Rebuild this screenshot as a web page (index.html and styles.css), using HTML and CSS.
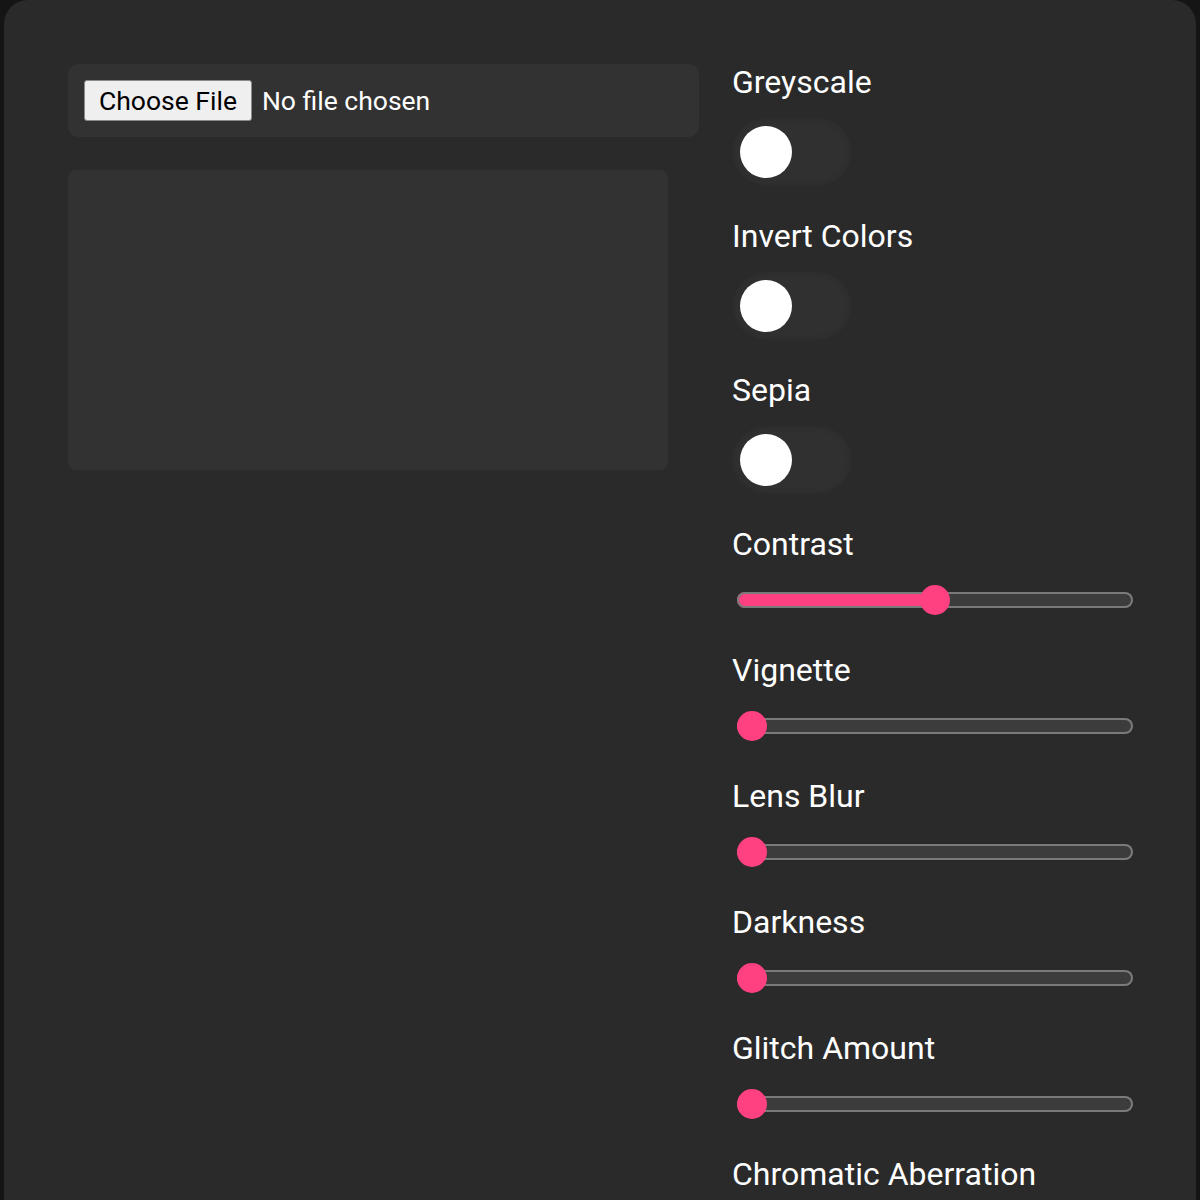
FILE: index.html
```html
<!DOCTYPE html>
<html lang="en">
<head>
  <meta charset="UTF-8">
  <meta name="viewport" content="width=device-width, initial-scale=1.0">
  <title>Photo Effects</title>
  <link rel="stylesheet" href="styles.css">
</head>
<body>
  <div class="container">
    <div class="preview-column">
      <div class="upload-box">
        <input type="file" id="file-input" accept="image/*">
      </div>
      <div class="preview" id="preview"></div>
    </div>
    <div class="controls">
      <div class="control">
        <label class="control-label" for="greyscale">Greyscale</label>
        <label class="switch">
          <input type="checkbox" id="greyscale">
          <span class="knob"></span>
        </label>
      </div>
      <div class="control">
        <label class="control-label" for="invert">Invert Colors</label>
        <label class="switch">
          <input type="checkbox" id="invert">
          <span class="knob"></span>
        </label>
      </div>
      <div class="control">
        <label class="control-label" for="sepia">Sepia</label>
        <label class="switch">
          <input type="checkbox" id="sepia">
          <span class="knob"></span>
        </label>
      </div>
      <div class="control">
        <label class="control-label" for="contrast">Contrast</label>
        <input type="range" class="slider" id="contrast" min="0" max="200" value="100">
      </div>
      <div class="control">
        <label class="control-label" for="vignette">Vignette</label>
        <input type="range" class="slider" id="vignette" min="0" max="100" value="0">
      </div>
      <div class="control">
        <label class="control-label" for="blur">Lens Blur</label>
        <input type="range" class="slider" id="blur" min="0" max="100" value="0">
      </div>
      <div class="control">
        <label class="control-label" for="darkness">Darkness</label>
        <input type="range" class="slider" id="darkness" min="0" max="100" value="0">
      </div>
      <div class="control">
        <label class="control-label" for="glitch">Glitch Amount</label>
        <input type="range" class="slider" id="glitch" min="0" max="100" value="0">
      </div>
      <div class="control">
        <label class="control-label" for="chromatic">Chromatic Aberration</label>
        <input type="range" class="slider" id="chromatic" min="0" max="100" value="0">
      </div>
    </div>
  </div>
  <script>
    // Paint the filled part of each slider
    const sliders = document.querySelectorAll('.slider');

    function paintSlider(slider) {
      const min = Number(slider.min);
      const max = Number(slider.max);
      const pct = ((slider.value - min) / (max - min)) * 100;
      slider.style.setProperty('--fill', pct + '%');
    }

    sliders.forEach((slider) => {
      paintSlider(slider);
      slider.addEventListener('input', () => paintSlider(slider));
    });
  </script>
</body>
</html>
```

FILE: styles.css
```css
* {
  box-sizing: border-box;
}
body {
  margin: 0;
  padding: 0 4px;
  background-color: #151515;
  font-family: Roboto, "Noto Sans", sans-serif;
  color: #fff;
}
.container {
  background: #2a2a2a;
  border-radius: 24px;
  padding: 64px 64px;
  display: grid;
  grid-template-columns: 631px 1fr;
  column-gap: 33px;
  align-items: start;
}
.preview-column {
  display: flex;
  flex-direction: column;
  gap: 33px;
}
.upload-box {
  background: #323232;
  border-radius: 10px;
  padding: 16px;
}
.upload-box input {
  font-family: Roboto, "Noto Sans", sans-serif;
  font-size: 26.5px;
  color: #fff;
  display: block;
}
.upload-box input::file-selector-button {
  font-family: Roboto, "Noto Sans", sans-serif;
  font-size: 26.5px;
  height: 41px;
  padding: 0 14px;
  margin-right: 10px;
  background: #efefef;
  color: #000;
  border: 1px solid #8a8a8a;
  border-radius: 3px;
}
.preview {
  width: 600px;
  height: 300px;
  background: #323232;
  border-radius: 8px;
}
.controls {
  display: flex;
  flex-direction: column;
  gap: 32px;
}
.control {
  display: flex;
  flex-direction: column;
  align-items: flex-start;
}
.control-label {
  font-size: 32px;
  line-height: 37px;
  margin-bottom: 17px;
}
.switch {
  position: relative;
  display: block;
  width: 120px;
  height: 68px;
  border-radius: 34px;
  background: #303030;
  box-shadow: inset 0 0 6px rgba(0, 0, 0, 0.15);
  cursor: pointer;
}
.switch input {
  display: none;
}
.knob {
  position: absolute;
  top: 8px;
  left: 8px;
  width: 52px;
  height: 52px;
  border-radius: 50%;
  background: #fff;
  transition: left 0.2s ease;
}
.switch input:checked + .knob {
  left: 60px;
  background: #ff4081;
}
.slider {
  -webkit-appearance: none;
  appearance: none;
  margin: 0;
  width: 396px;
  height: 40px;
  margin-left: 5px;
  background: transparent;
  cursor: pointer;
}
.slider::-webkit-slider-runnable-track {
  height: 16px;
  border-radius: 8px;
  box-shadow: inset 0 0 0 2px #7a7a7a;
  background: linear-gradient(to right, #ff4081 var(--fill, 0%), #3c3c3c var(--fill, 0%));
}
.slider::-webkit-slider-thumb {
  -webkit-appearance: none;
  appearance: none;
  width: 30px;
  height: 30px;
  margin-top: -7px;
  border-radius: 50%;
  background: #ff4081;
  border: none;
}
```
